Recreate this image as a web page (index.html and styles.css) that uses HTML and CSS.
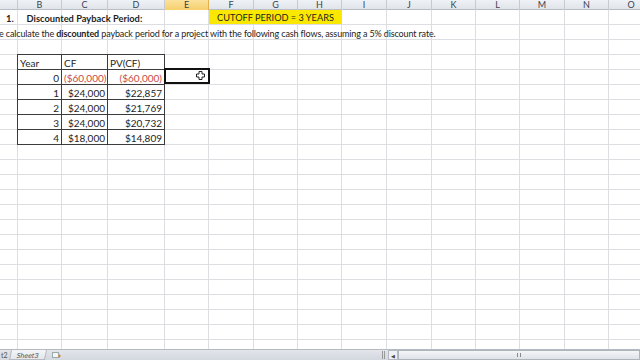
FILE: index.html
```html
<!DOCTYPE html>
<html>
<head>
<meta charset="utf-8">
<link rel="stylesheet" href="styles.css">
</head>
<body>
<div class="app">
  <div class="colhdr">
    <div class="ch"></div>
    <div class="ch">B</div>
    <div class="ch">C</div>
    <div class="ch">D</div>
    <div class="ch ch-sel">E</div>
    <div class="ch">F</div>
    <div class="ch">G</div>
    <div class="ch">H</div>
    <div class="ch">I</div>
    <div class="ch">J</div>
    <div class="ch">K</div>
    <div class="ch">L</div>
    <div class="ch">M</div>
    <div class="ch">N</div>
    <div class="ch">O</div>
  </div>
  <div class="sheet">
    <div class="title"><span class="num">1.</span><span>Discounted Payback Period:</span></div>
    <div class="cutoff">CUTOFF PERIOD = 3 YEARS</div>
    <div class="desc">e calculate the <b>discounted</b> payback period for a project with the following cash flows, assuming a 5% discount rate.</div>
    <div class="tbl">
      <div class="c l">Year</div><div class="c l">CF</div><div class="c l">PV(CF)</div>
      <div class="c">0</div><div class="c red">($60,000)</div><div class="c red">($60,000)</div>
      <div class="c">1</div><div class="c">$24,000</div><div class="c">$22,857</div>
      <div class="c">2</div><div class="c">$24,000</div><div class="c">$21,769</div>
      <div class="c">3</div><div class="c">$24,000</div><div class="c">$20,732</div>
      <div class="c">4</div><div class="c">$18,000</div><div class="c">$14,809</div>
    </div>
    <div class="selcell">
      <svg class="cursor" width="9" height="9" viewBox="0 0 9 9"><path d="M3 0.5h3v2.5h2.5v3h-2.5v2.5h-3v-2.5h-2.5v-3h2.5z" fill="#fff" stroke="#222" stroke-width="1"/></svg>
    </div>
  </div>
  <div class="tabs">
    <span class="tabtxt">t2</span>
    <span class="tab">Sheet3</span>
    <span class="newtab"><svg width="9" height="7" viewBox="0 0 9 7"><rect x="0.5" y="0.5" width="6" height="5" fill="#f4f4f4" stroke="#9aa"/><path d="M6 4h3M7.5 2.5v3" stroke="#d9822b" stroke-width="1"/></svg></span>
    <span class="tabfill"></span>
    <span class="split"></span>
    <span class="sbtn">&#9664;</span>
    <span class="scroll"><span class="grip"></span></span>
  </div>
</div>
</body>
</html>
```

FILE: styles.css
```css
* { box-sizing: border-box; margin: 0; padding: 0; }
html, body { width: 640px; height: 360px; overflow: hidden; background: #fff; }
body { font-family: Lato, "Open Sans", sans-serif; font-size: 10px; color: #1e1e1e; }

.app { width: 640px; height: 360px; display: flex; flex-direction: column; overflow: hidden; }

.colhdr {
  height: 10px;
  display: grid;
  grid-template-columns: 18px 44px 46px 57px 44px 45px 44px 44px 45px 45px 44px 44px 45px 44px 45px;
  background: linear-gradient(#eef1f5, #e1e5ea);
  border-bottom: 1px solid #b9bec6;
  flex: none;
}
.ch {
  border-right: 1px solid #c6cbd2;
  font-size: 9px;
  line-height: 10px;
  text-align: center;
  color: #3c4250;
}
.ch-sel { background: linear-gradient(#fbe19c, #f6cf6c); border-right-color: #e3b24d; }

.sheet {
  flex: 1;
  display: grid;
  grid-template-columns: 18px 44px 46px 57px 44px 45px 44px 44px 45px 45px 44px 44px 45px 44px 45px;
  grid-template-rows: repeat(23, 15px);
  background:
    linear-gradient(#dcdee1, #dcdee1) 17px 0 / 1px 100% no-repeat,
    linear-gradient(#dcdee1, #dcdee1) 61px 0 / 1px 100% no-repeat,
    linear-gradient(#dcdee1, #dcdee1) 107px 0 / 1px 100% no-repeat,
    linear-gradient(#dcdee1, #dcdee1) 164px 0 / 1px 100% no-repeat,
    linear-gradient(#dcdee1, #dcdee1) 208px 0 / 1px 100% no-repeat,
    linear-gradient(#dcdee1, #dcdee1) 253px 0 / 1px 100% no-repeat,
    linear-gradient(#dcdee1, #dcdee1) 297px 0 / 1px 100% no-repeat,
    linear-gradient(#dcdee1, #dcdee1) 341px 0 / 1px 100% no-repeat,
    linear-gradient(#dcdee1, #dcdee1) 386px 0 / 1px 100% no-repeat,
    linear-gradient(#dcdee1, #dcdee1) 431px 0 / 1px 100% no-repeat,
    linear-gradient(#dcdee1, #dcdee1) 475px 0 / 1px 100% no-repeat,
    linear-gradient(#dcdee1, #dcdee1) 519px 0 / 1px 100% no-repeat,
    linear-gradient(#dcdee1, #dcdee1) 564px 0 / 1px 100% no-repeat,
    linear-gradient(#dcdee1, #dcdee1) 608px 0 / 1px 100% no-repeat,
    repeating-linear-gradient(to bottom, transparent 0 14px, #dcdee1 14px 15px);
  overflow: hidden;
  min-height: 0;
}

.title {
  grid-row: 1; grid-column: 1 / 6;
  display: flex; align-items: center;
  font-weight: bold;
  font-size: 9.3px;
  white-space: nowrap;
  padding: 2px 0 0 6px;
  gap: 13px;
}
.cutoff {
  grid-row: 1; grid-column: 6 / 9;
  background: #fbe800;
  text-align: center;
  font-size: 9.2px;
  line-height: 15px;
  padding-top: 1px;
  margin-top: -1px;
  height: 15px;
}
.desc {
  grid-row: 2; grid-column: 1 / -1;
  white-space: nowrap;
  font-size: 9px;
  letter-spacing: -0.13px;
  line-height: 14px;
  padding-top: 2px;
  margin-left: -1px;
}

.tbl {
  grid-row: 4 / 10; grid-column: 2 / 5;
  align-self: start; justify-self: start;
  margin: -1px 0 0 -1px;
  display: grid;
  grid-template-columns: 43px 45px 56px;
  grid-auto-rows: 14px;
  gap: 1px;
  background: #3c3c3c;
  border: 1px solid #3c3c3c;
}
.c {
  background: #fff;
  text-align: right;
  padding: 1px 2px 0;
  line-height: 14px;
  white-space: nowrap;
}
.c.l { text-align: left; }
.c.red { color: #c84b47; }

.selcell {
  grid-row: 5; grid-column: 5;
  margin: -2px 0 0 -1px;
  height: 16px;
  width: 46px;
  border: 2px solid #111;
  position: relative;
}
.cursor { position: absolute; right: 3px; top: 1px; }

.tabs {
  flex: none;
  height: 11px;
  display: flex;
  align-items: stretch;
  background: linear-gradient(#e2e5ea, #d3d8df);
  border-top: 1px solid #b5bac2;
  font-size: 7px;
  color: #555;
}
.tabtxt { width: 10px; line-height: 10px; padding-left: 1px; }
.tab { padding: 0 6px; line-height: 10px; background: linear-gradient(#f4f5f7, #e4e7eb); border: 1px solid #b5bac2; border-top: none; transform: skewX(-12deg); }
.newtab { display: flex; align-items: center; padding-left: 6px; width: 16px; }
.tabfill { flex: 1; }
.split { width: 3px; border-left: 1px solid #999; border-right: 1px solid #999; margin: 1px 3px; }
.sbtn { width: 10px; font-size: 5px; line-height: 10px; text-align: center; color: #444; background: #eef0f3; border: 1px solid #b5bac2; }
.scroll { width: 242px; background: linear-gradient(#f3f5f7, #dfe3e8); border: 1px solid #aeb4bc; display: flex; justify-content: center; align-items: center; }
.grip { width: 4px; height: 4px; border-left: 1px solid #888; border-right: 1px solid #888; }
```
